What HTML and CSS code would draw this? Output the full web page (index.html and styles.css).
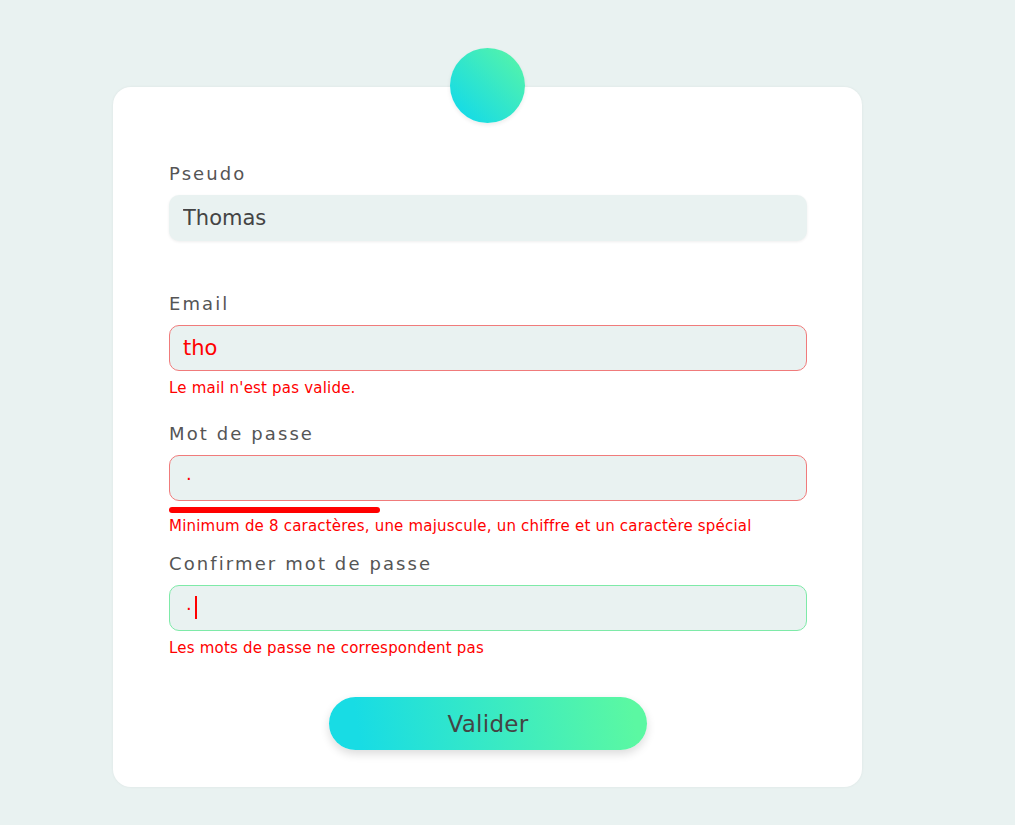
FILE: index.html
```html
<!DOCTYPE html>
<html lang="fr">
<head>
<meta charset="utf-8">
<title>Inscription</title>
<link rel="stylesheet" href="styles.css">
</head>
<body>
<form class="card">
  <div class="avatar"></div>
  <div class="field">
    <label class="label" for="pseudo">Pseudo</label>
    <input class="input" id="pseudo" type="text" value="Thomas">
  </div>
  <div class="field">
    <label class="label" for="email">Email</label>
    <input class="input input-error text-error" id="email" type="text" value="tho">
    <p class="error">Le mail n'est pas valide.</p>
  </div>
  <div class="field">
    <label class="label" for="pwd">Mot de passe</label>
    <input class="input input-error text-error dot" id="pwd" type="text" value="·">
    <div class="strength" style="width:211px"></div>
    <p class="error error-tight">Minimum de 8 caractères, une majuscule, un chiffre et un caractère spécial</p>
  </div>
  <div class="field">
    <label class="label" for="pwd2">Confirmer mot de passe</label>
    <div class="input-wrap">
      <input class="input input-ok text-error dot" id="pwd2" type="text" value="·">
      <span class="caret"></span>
    </div>
    <p class="error">Les mots de passe ne correspondent pas</p>
  </div>
  <div class="actions">
    <button class="submit" type="button">Valider</button>
  </div>
</form>
</body>
</html>
```
FILE: styles.css
```css
html, body {
  margin: 0;
  padding: 0;
}
body {
  background: #e9f2f1;
  font-family: "DejaVu Sans", sans-serif;
  min-height: 825px;
  padding-top: 87px;
  padding-left: 113px;
  box-sizing: border-box;
}
.card {
  position: relative;
  width: 749px;
  box-sizing: border-box;
  background: #fff;
  border-radius: 18px;
  box-shadow: 0 0 3px rgba(0, 0, 0, 0.06);
  padding: 76px 55px 37px 56px;
}
.avatar {
  position: absolute;
  top: -39px;
  left: 50%;
  width: 75px;
  height: 75px;
  margin-left: -38px;
  border-radius: 50%;
  background: linear-gradient(45deg, #18dce4 15%, #5bf6a4 100%);
  box-shadow: 0 2px 4px rgba(0, 0, 0, 0.08);
}
.field {
  height: 130px;
  display: flex;
  flex-direction: column;
}
.label {
  display: block;
  font-size: 18px;
  line-height: 22px;
  letter-spacing: 2.1px;
  color: #555;
  margin-bottom: 10px;
}
.input-wrap {
  position: relative;
}
.input {
  display: block;
  width: 100%;
  height: 46px;
  box-sizing: border-box;
  border: 1px solid transparent;
  border-radius: 10px;
  background: #e9f2f1;
  box-shadow: 0 1px 3px rgba(0, 0, 0, 0.07);
  padding: 0 13px;
  font-family: "DejaVu Sans", sans-serif;
  font-size: 21px;
  color: #444;
  outline: none;
}
.input-error {
  border-color: #f07b7b;
  box-shadow: none;
}
.input-ok {
  border-color: #7eeaa8;
  box-shadow: none;
}
.text-error {
  color: #ff0000;
}
.dot {
  padding-left: 16px;
  font-size: 18px;
}
.caret {
  position: absolute;
  left: 26px;
  top: 11px;
  width: 1.5px;
  height: 23px;
  background: #ff0000;
}
.strength {
  height: 6px;
  border-radius: 3px;
  background: #ff0000;
  margin-top: 6px;
}
.error {
  margin: 8px 0 0 0;
  font-size: 15px;
  line-height: 18px;
  letter-spacing: 0.2px;
  color: #ff0000;
}
.error-tight {
  margin-top: 4px;
}
.actions {
  display: flex;
  justify-content: center;
  padding-top: 14px;
}
.submit {
  width: 318px;
  height: 53px;
  border: none;
  border-radius: 27px;
  background: linear-gradient(80deg, #18dce4 10%, #5bf8a2 95%);
  box-shadow: 0 4px 10px rgba(0, 0, 0, 0.14);
  font-family: "DejaVu Sans", sans-serif;
  font-size: 23px;
  letter-spacing: 0.3px;
  color: #444;
  cursor: pointer;
}
```
